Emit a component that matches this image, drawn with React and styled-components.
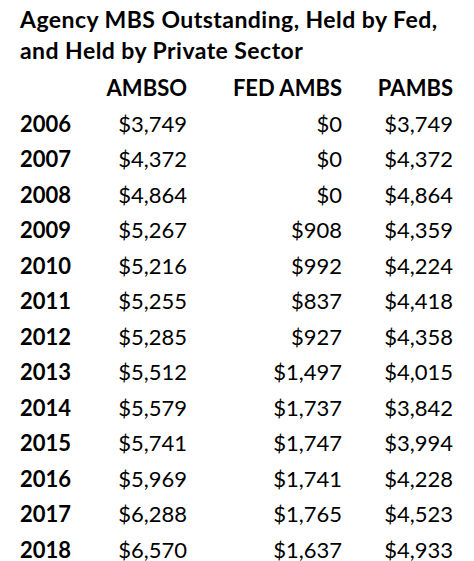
import React from 'react'
import styled, { createGlobalStyle } from 'styled-components'

const rows = [
  ['2006', '$3,749', '$0', '$3,749'],
  ['2007', '$4,372', '$0', '$4,372'],
  ['2008', '$4,864', '$0', '$4,864'],
  ['2009', '$5,267', '$908', '$4,359'],
  ['2010', '$5,216', '$992', '$4,224'],
  ['2011', '$5,255', '$837', '$4,418'],
  ['2012', '$5,285', '$927', '$4,358'],
  ['2013', '$5,512', '$1,497', '$4,015'],
  ['2014', '$5,579', '$1,737', '$3,842'],
  ['2015', '$5,741', '$1,747', '$3,994'],
  ['2016', '$5,969', '$1,741', '$4,228'],
  ['2017', '$6,288', '$1,765', '$4,523'],
  ['2018', '$6,570', '$1,637', '$4,933'],
]

export default function App() {
  return (
    <Page>
      <GlobalStyle />
      <Title>
        Agency MBS Outstanding, Held by Fed,
        <br />
        and Held by Private Sector
      </Title>

      <Table>
        <Cell />
        <Cell $bold $right>AMBSO</Cell>
        <Cell $bold $right>FED AMBS</Cell>
        <Cell $bold $right>PAMBS</Cell>

        {rows.map(([year, ambso, fed, pambs]) => (
          <React.Fragment key={year}>
            <Cell $bold>{year}</Cell>
            <Cell $right>{ambso}</Cell>
            <Cell $right>{fed}</Cell>
            <Cell $right>{pambs}</Cell>
          </React.Fragment>
        ))}
      </Table>
    </Page>
  )
}

const GlobalStyle = createGlobalStyle`
  body {
    margin: 0;
    background: #fff;
    font-family: Lato, "Open Sans", sans-serif;
  }
`

const Page = styled.div`
  width: 474px;
  height: 561px;
  overflow: hidden;
  padding: 4px 0 0 20px;
  box-sizing: border-box;
  color: #000;
`

const Title = styled.div`
  font-size: 23px;
  font-weight: 700;
  line-height: 31px;
  letter-spacing: 0.45px;
  margin-bottom: 4px;
`

const Table = styled.div`
  display: grid;
  grid-template-columns: 80px 87px 155px 111px;
  grid-auto-rows: 35.5px;
  font-size: 22px;
  line-height: 35.5px;
`

const Cell = styled.div`
  font-weight: ${p => (p.$bold ? 700 : 400)};
  text-align: ${p => (p.$right ? 'right' : 'left')};
  white-space: nowrap;
`
